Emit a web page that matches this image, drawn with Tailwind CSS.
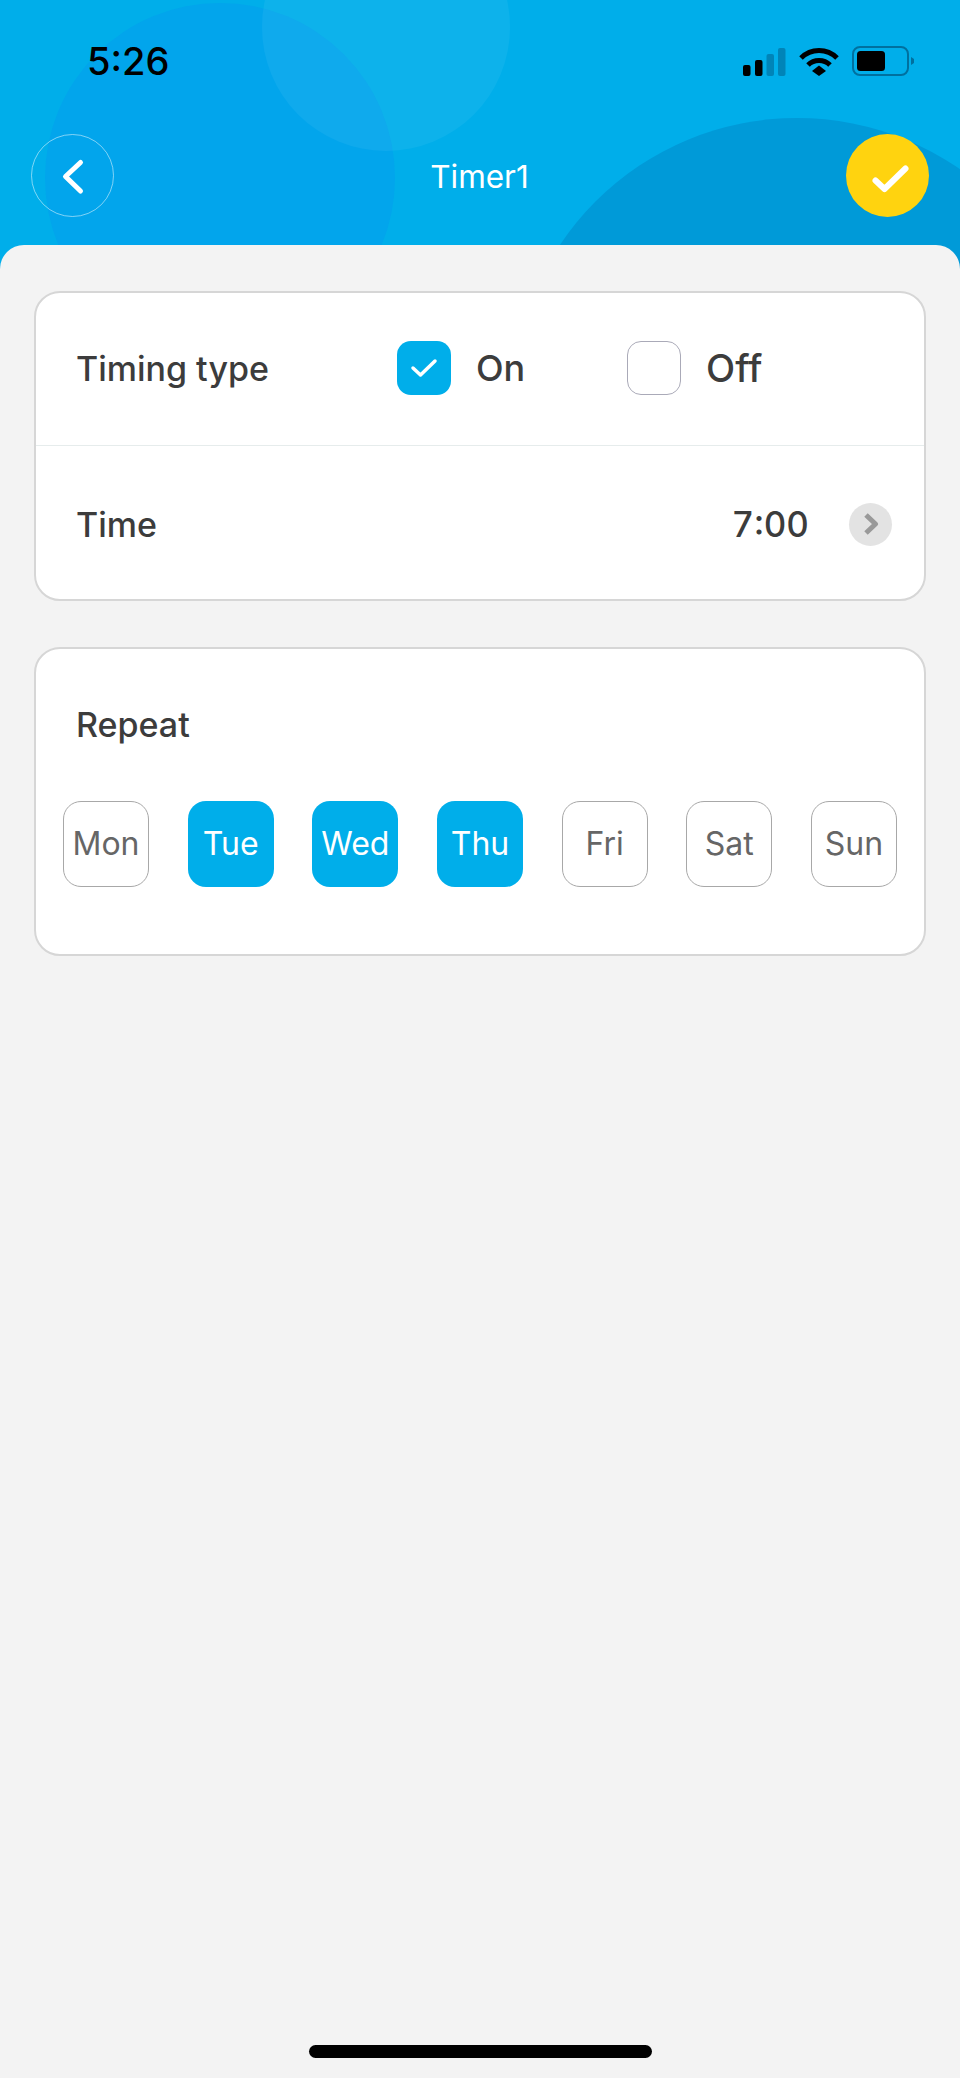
<!DOCTYPE html>
<html lang="en">
<head>
    <meta charset="UTF-8" />
    <meta name="viewport" content="width=device-width, initial-scale=1.0" />
    <title>Timer1</title>
    <script src="https://cdn.jsdelivr.net/npm/@tailwindcss/browser@4"></script>
</head>
<body class="bg-[#00aeea] font-['Inter',sans-serif]">
    <div class="relative w-[960px] h-[2078px] overflow-hidden flex flex-col">
        <!-- header bubbles -->
        <div class="absolute left-[45px] top-[3px] w-[350px] h-[350px] rounded-full bg-[#02a5ec]"></div>
        <div class="absolute left-[262px] top-[-97px] w-[248px] h-[248px] rounded-full bg-white/5"></div>
        <div class="absolute left-[512px] top-[118px] w-[570px] h-[570px] rounded-full bg-[#009ad8]"></div>

        <header class="relative h-[245px] shrink-0">
            <!-- status bar -->
            <div class="h-[134px] pl-[87px] pr-[45px] pt-[39px] flex justify-between items-start">
                <span class="text-[38px] leading-[45px] font-medium text-black">5:26</span>
                <div class="flex items-center gap-[13px] pt-[7px]">
                    <svg width="43" height="29" viewBox="0 0 43 29">
                        <rect x="0" y="18" width="7.5" height="11" rx="2" fill="#000" />
                        <rect x="12" y="13" width="7.5" height="16" rx="2" fill="#000" />
                        <rect x="23.5" y="7" width="7.5" height="22" rx="2" fill="#0084b8" />
                        <rect x="35" y="1" width="7.5" height="28" rx="2" fill="#0084b8" />
                    </svg>
                    <svg width="40" height="29" viewBox="0 0 40 29">
                        <path d="M2 11 C12 1 28 1 38 11" fill="none" stroke="#000" stroke-width="5" />
                        <path d="M9 18 C15 12 25 12 31 18" fill="none" stroke="#000" stroke-width="5" />
                        <path d="M13 24 L20 18.5 L27 24 L20 29 Z" fill="#000" />
                    </svg>
                    <svg width="63" height="30" viewBox="0 0 63 30">
                        <rect x="1" y="1" width="55" height="28" rx="7" fill="none" stroke="#00709f" stroke-width="2" />
                        <rect x="5" y="5" width="28" height="20" rx="3.5" fill="#000" />
                        <path d="M59 11 L62 13 V17 L59 19 Z" fill="#00709f" />
                    </svg>
                </div>
            </div>
            <!-- nav -->
            <div class="relative px-[31px] flex items-center justify-between">
                <button class="w-[83px] h-[83px] rounded-full border border-white/50 flex items-center justify-center">
                    <svg width="48" height="48" viewBox="0 0 48 48"><path d="M31.500 10.500 L16.500 24.500 L31.500 39" fill="none" stroke="#fff" stroke-width="5" stroke-linecap="round" stroke-linejoin="round" /></svg>
                </button>
                <h1 class="mt-[2px] -ml-[1px] text-[31.5px] text-white">Timer1</h1>
                <button class="w-[83px] h-[83px] rounded-full bg-[#ffd30f] flex items-center justify-center">
                    <svg width="48" height="48" viewBox="0 0 48 48"><path d="M11.500 28.500 L20.500 37 L41.500 16.500" fill="none" stroke="#fff" stroke-width="6" stroke-linecap="round" stroke-linejoin="round" /></svg>
                </button>
            </div>
        </header>

        <main class="relative flex-1 bg-[#f3f3f3] rounded-t-[24px] pt-[46px] px-[34px] text-[#3c3c3c]">
            <section class="bg-white border-2 border-[#d6d6d6] rounded-[26px] h-[310px]">
                <div class="h-[153px] pb-[2px] border-b border-[#e6ecec] pl-[40px] flex items-center font-medium">
                    <span class="w-[321px] text-[34px]">Timing type</span>
                    <span class="w-[54px] h-[54px] rounded-[14px] bg-[#00aeea] flex items-center justify-center">
                        <svg width="28" height="22" viewBox="0 0 28 22"><path d="M3 11 L10.500 18 L25 4" fill="none" stroke="#fff" stroke-width="3.500" stroke-linecap="round" stroke-linejoin="round" /></svg>
                    </span>
                    <span class="w-[176px] pl-[25px] text-[36px]">On</span>
                    <span class="w-[54px] h-[54px] rounded-[14px] border border-[#aaaab8]"></span>
                    <span class="pl-[25px] text-[38px]">Off</span>
                </div>
                <div class="h-[153px] pt-[3px] pl-[40px] pr-[32px] flex items-center justify-between font-medium">
                    <span class="text-[34px]">Time</span>
                    <div class="flex items-center gap-[40px]">
                        <span class="text-[35px] tabular-nums">7:00</span>
                        <span class="w-[43px] h-[43px] rounded-full bg-[#e3e3e3] flex items-center justify-center">
                            <svg width="16" height="24" viewBox="0 0 16 24"><path d="M3 3 L12.500 12 L3 21" fill="none" stroke="#999" stroke-width="5" stroke-linejoin="round" /></svg>
                        </span>
                    </div>
                </div>
            </section>

            <section class="mt-[46px] bg-white border-2 border-[#d6d6d6] rounded-[26px] h-[309px] pt-[56px] px-[27px]">
                <h2 class="pl-[13px] text-[34px] leading-[40px] font-medium">Repeat</h2>
                <div class="mt-[56px] flex justify-between text-[32px]">
                    <span class="w-[86px] h-[86px] rounded-[18px] border border-[#a8a8a8] text-[#666] flex items-center justify-center">Mon</span>
                    <span class="w-[86px] h-[86px] rounded-[18px] bg-[#00aeea] text-white flex items-center justify-center">Tue</span>
                    <span class="w-[86px] h-[86px] rounded-[18px] bg-[#00aeea] text-white flex items-center justify-center">Wed</span>
                    <span class="w-[86px] h-[86px] rounded-[18px] bg-[#00aeea] text-white flex items-center justify-center">Thu</span>
                    <span class="w-[86px] h-[86px] rounded-[18px] border border-[#a8a8a8] text-[#666] flex items-center justify-center">Fri</span>
                    <span class="w-[86px] h-[86px] rounded-[18px] border border-[#a8a8a8] text-[#666] flex items-center justify-center">Sat</span>
                    <span class="w-[86px] h-[86px] rounded-[18px] border border-[#a8a8a8] text-[#666] flex items-center justify-center">Sun</span>
                </div>
            </section>

            <div class="absolute bottom-[20px] left-[309px] w-[343px] h-[13px] rounded-full bg-black"></div>
        </main>
    </div>
</body>
</html>
